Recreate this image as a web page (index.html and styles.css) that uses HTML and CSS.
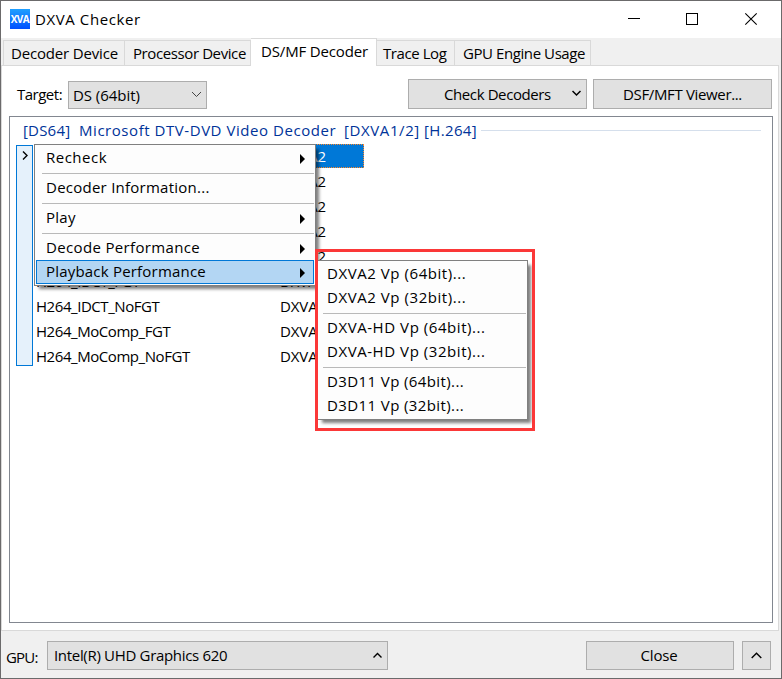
FILE: index.html
```
<!DOCTYPE html>
<html lang="en">
<head>
<meta charset="utf-8">
<title>DXVA Checker</title>
<link rel="stylesheet" href="styles.css">
</head>
<body>
<div class="window">
  <header class="titlebar">
    <span class="logo"><b>XVA</b></span>
    <span class="title">DXVA Checker</span>
    <svg class="controls" width="130" height="14" viewBox="0 0 130 14" fill="none" stroke="#000">
      <path d="M0 6.5h12" />
      <rect x="58.500" y="1.500" width="11" height="11" />
      <path d="M117.300 1.300l11.400 11.400M128.700 1.300l-11.400 11.400" stroke-width="1.100" />
    </svg>
  </header>
  <nav class="tabs">
    <span class="tab t1">Decoder Device</span>
    <span class="tab t2">Processor Device</span>
    <span class="tab active">DS/MF Decoder</span>
    <span class="tab t4">Trace Log</span>
    <span class="tab t5">GPU Engine Usage</span>
  </nav>
  <main class="panel">
    <div class="toolbar">
      <span class="target">Target:</span>
      <div class="box combo">DS (64bit)
        <svg class="chev" width="11" height="7" viewBox="0 0 11 7" fill="none" stroke="#444"><path d="M1 1l4.500 4.500L10 1" /></svg>
      </div>
      <div class="box check"><span>Check Decoders</span>
        <svg class="chev" width="9" height="7" viewBox="0 0 9 7" fill="none" stroke="#000" stroke-width="1.500"><path d="M.5 1l4 4 4-4" /></svg>
      </div>
      <div class="box viewer">DSF/MFT Viewer...</div>
    </div>
    <section class="list">
      <h1 class="group"><span class="g1">[DS64]</span><span class="g2">Microsoft DTV-DVD Video Decoder</span><span class="g3">[DXVA1/2]</span><span class="g4">[H.264]</span><i></i></h1>
      <div class="grid">
        <div class="rowhead"><svg width="6" height="9" viewBox="0 0 6 9" fill="none" stroke="#000" stroke-width="1.400"><path d="M1 .5l4 4-4 4" /></svg></div>
        <div class="rows">
          <div class="row"><span class="name"></span><span class="api sel">DXVA2</span></div>
          <div class="row"><span class="name"></span><span class="api">DXVA2</span></div>
          <div class="row"><span class="name"></span><span class="api">DXVA2</span></div>
          <div class="row"><span class="name"></span><span class="api">DXVA2</span></div>
          <div class="row"><span class="name"></span><span class="api">DXVA2</span></div>
          <div class="row"><span class="name">H264_IDCT_FGT</span><span class="api">DXVA2</span></div>
          <div class="row"><span class="name">H264_IDCT_NoFGT</span><span class="api">DXVA2</span></div>
          <div class="row"><span class="name">H264_MoComp_FGT</span><span class="api">DXVA2</span></div>
          <div class="row"><span class="name">H264_MoComp_NoFGT</span><span class="api">DXVA2</span></div>
        </div>
      </div>
    </section>
  </main>
  <footer class="footer">
    <span class="gpu">GPU:</span>
    <div class="box device"><span>Intel(R) UHD Graphics 620</span>
      <svg class="chev" width="9" height="7" viewBox="0 0 9 7" fill="none" stroke="#000" stroke-width="1.400"><path d="M.5 5.500l4-4 4 4" /></svg>
    </div>
    <div class="box close">Close</div>
    <div class="box up"><svg width="11" height="7" viewBox="0 0 11 7" fill="none" stroke="#000" stroke-width="1.400"><path d="M.7 6l4.800-4.800L10.300 6" /></svg></div>
  </footer>

  <div class="menu main-menu">
    <div class="item sub m1">Recheck</div>
    <hr>
    <div class="item m2">Decoder Information...</div>
    <hr>
    <div class="item sub m2">Play</div>
    <hr>
    <div class="item sub m3">Decode Performance</div>
    <div class="item sub m4 hot">Playback Performance</div>
  </div>
  <div class="menu sub-menu">
    <div class="item">DXVA2 Vp (64bit)...</div>
    <div class="item">DXVA2 Vp (32bit)...</div>
    <hr>
    <div class="item">DXVA-HD Vp (64bit)...</div>
    <div class="item">DXVA-HD Vp (32bit)...</div>
    <hr>
    <div class="item d3d">D3D11 Vp (64bit)...</div>
    <div class="item d3d">D3D11 Vp (32bit)...</div>
  </div>
  <div class="frame"></div>
</div>
</body>
</html>
```
FILE: styles.css
```
* { box-sizing: border-box; }
body {
  margin: 0;
  font: 15px/22px "Open Sans", "Noto Sans", sans-serif;
  color: #000;
  white-space: nowrap;
}
svg { display: block; }
.window {
  position: relative;
  width: 782px;
  height: 679px;
  border: 1px solid #6b6a6b;
  background: #f0f0f0;
  overflow: hidden;
}
.titlebar {
  display: flex;
  align-items: center;
  height: 37px;
  padding: 0 23px 0 9px;
  background: #fff;
}
.logo {
  display: flex;
  align-items: center;
  justify-content: center;
  width: 20px;
  height: 20px;
  margin-top: -1px;
  background: linear-gradient(#1fa0ff, #0050ff);
  color: #fff;
  font: 10px/20px "Open Sans", sans-serif;
}
.logo b { font-weight: 700; letter-spacing: -0.5px; }
.title { margin: -2px 0 0 5px; letter-spacing: 0.6px; }
.controls { margin: -2px 0 0 auto; }

.tabs {
  display: flex;
  align-items: flex-end;
  height: 27px;
  padding-left: 2px;
}
.tab {
  height: 26px;
  margin-bottom: -1px;
  padding: 1px 0 0 7px;
  border: 1px solid #d9d9d9;
  border-left-width: 0;
}
.t1 { width: 122px; letter-spacing: -0.17px; border-left-width: 1px; }
.t2 { width: 126px; padding-left: 8px; letter-spacing: -0.4px; }
.active {
  z-index: 1;
  width: 126px;
  height: 28px;
  padding: 1px 0 0 10px;
  border-bottom: 0;
  background: #fff;
  letter-spacing: -0.16px;
}
.t4 { width: 78px; padding-left: 6px; letter-spacing: -0.42px; }
.t5 { width: 136px; padding-left: 8px; letter-spacing: -0.42px; }

.panel {
  width: 778px;
  height: 566px;
  padding: 13px 6px 7px 7px;
  border: 1px solid #d9d9d9;
  background: #fff;
}
.toolbar { display: flex; align-items: center; height: 30px; }
.target { width: 59px; padding-left: 8px; letter-spacing: -0.5px; }
.box {
  display: flex;
  align-items: center;
  height: 30px;
  border: 1px solid #adadad;
  background: #e1e1e1;
}
.chev { margin-left: auto; }
.combo { width: 139px; height: 28px; margin-top: 1px; padding: 0 4px 0 4px; letter-spacing: -0.05px; }
.check { width: 179px; margin-left: 201px; padding: 0 5px 1px 35px; letter-spacing: -0.4px; }
.viewer { width: 179px; margin-left: 6px; padding-bottom: 1px; justify-content: center; letter-spacing: -0.35px; }

.list {
  width: 764px;
  height: 507px;
  margin-top: 7px;
  padding: 1px 11px 0 6px;
  border: 1px solid #828790;
}
.group {
  display: flex;
  align-items: center;
  height: 25px;
  margin: 0 0 1px;
  padding-left: 7px;
  color: #003399;
  font: inherit;
}
.group span { padding-bottom: 1px; }
.g1 { width: 56px; letter-spacing: 0.2px; }
.g2 { width: 265px; letter-spacing: 0.55px; }
.g3 { width: 80px; letter-spacing: 0.6px; }
.g4 { width: 57px; letter-spacing: 0.35px; }
.group i { flex: 1; height: 1px; background: #d5dfec; }
.grid { display: flex; }
.rowhead {
  width: 17px;
  height: 221px;
  margin-top: 1px;
  padding: 5px 0 0 5px;
  border: 1px solid #0078d7;
  background: #e5f1fb;
}
.row { display: flex; height: 25px; letter-spacing: -0.44px; }
.name { width: 246px; padding-left: 3px; line-height: 24px; }
.api { width: 85px; padding-left: 1px; line-height: 24px; letter-spacing: -0.1px; }
.sel {
  height: 24px;
  line-height: 22px;
  padding-left: 0;
  border: 1px dotted #ff8728;
  background: #0078d7;
  color: #fff;
}

.footer { display: flex; height: 48px; padding: 10px 10px 0 5px; }
.gpu { width: 41px; padding-top: 5px; letter-spacing: -0.8px; }
.footer .box { height: 29px; }
.device { width: 341px; padding: 0 5px 0 6px; letter-spacing: -0.32px; }
.device span { padding-bottom: 1px; }
.close { width: 148px; margin-left: 198px; padding: 0 2px 1px 0; justify-content: center; letter-spacing: -0.2px; }
.up { width: 29px; margin-left: 8px; justify-content: center; }

.menu {
  position: absolute;
  padding: 1px;
  border: 1px solid #808080;
  background: #fdfdfd;
  box-shadow: 4px 4px 3px -1px rgba(0, 0, 0, 0.5);
}
.main-menu { left: 33px; top: 143px; width: 282px; height: 142px; }
.sub-menu { left: 316px; top: 259px; width: 211px; height: 160px; }
.item {
  position: relative;
  height: 24px;
  padding-left: 10px;
  line-height: 23px;
  letter-spacing: 0.56px;
}
.sub-menu .item { padding-left: 8px; }
.menu .d3d { letter-spacing: 0.4px; }
.m1 { letter-spacing: 0.5px; }
.m2 { letter-spacing: 0.25px; }
.m3 { letter-spacing: 0.35px; }
.m4 { letter-spacing: 0.2px; }
.sub::after {
  content: "";
  position: absolute;
  right: 9px;
  top: 8px;
  border: 5px solid transparent;
  border-left: 5px solid #000;
  border-right: 0;
}
.hot { padding-left: 9px; border: 1px solid #0078d7; background: #b3d6f3; line-height: 21px; }
.hot.sub::after { right: 8px; top: 7px; }
.menu hr {
  height: 1px;
  margin: 3px 0 2px 6px;
  border: 0;
  background: #b9b9b9;
}
.sub-menu hr { margin-left: 4px; }
.frame {
  position: absolute;
  left: 314px;
  top: 248px;
  width: 220px;
  height: 182px;
  border: 3px solid #fb3838;
}
```
